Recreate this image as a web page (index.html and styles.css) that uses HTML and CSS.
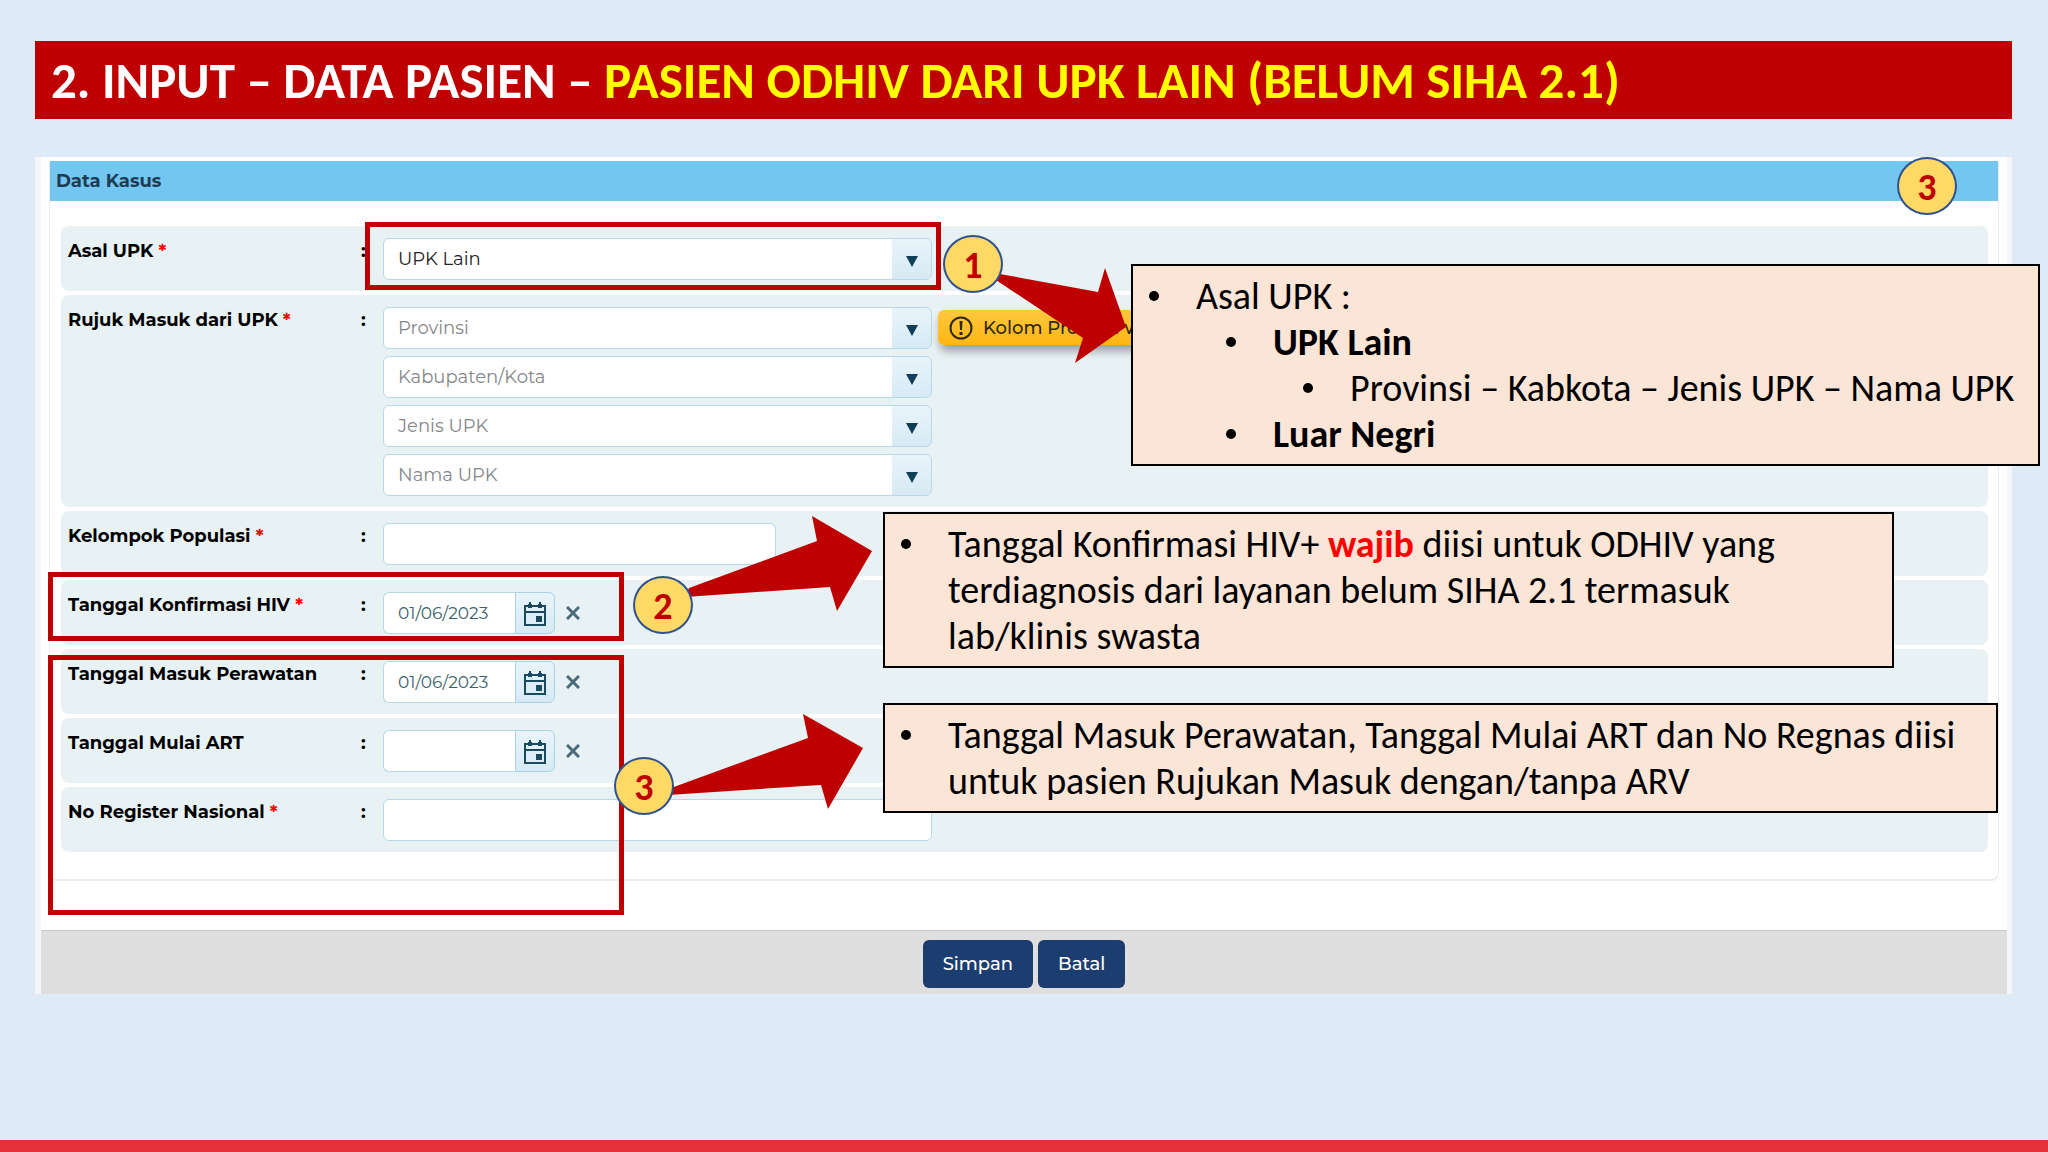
FILE: index.html
```html
<!DOCTYPE html>
<html lang="id">
<head>
<meta charset="utf-8">
<meta name="viewport" content="width=device-width, initial-scale=1">
<title>Input Data Pasien</title>
<link rel="stylesheet" href="styles.css">
</head>
<body>
<svg class="sprite" aria-hidden="true">
  <symbol id="calendar" viewBox="0 0 24 26">
    <path d="M2 5h20v19H2zM2 11h20M7 1v6M17 1v6" fill="none" stroke="currentColor" stroke-width="2"/>
    <path d="M5 3h4v4H5zM15 3h4v4h-4zM13 15h6v6h-6z" fill="currentColor"/>
  </symbol>
  <symbol id="caret" viewBox="0 0 12 11"><path d="M0 0h12L6 11z" fill="currentColor"/></symbol>
  <symbol id="cross" viewBox="0 0 14 14"><path d="M1 1l12 12M13 1L1 13" fill="none" stroke="currentColor" stroke-width="3"/></symbol>
</svg>
<main class="slide">
  <h1 class="title">2. INPUT – DATA PASIEN – <span class="title-accent">PASIEN ODHIV DARI UPK LAIN (BELUM SIHA 2.1)</span></h1>

  <form class="window">
    <section class="panel">
      <h2 class="panel-title">Data Kasus</h2>
      <div class="rows">
        <div class="row">
          <label class="label" for="asal">Asal UPK <span class="req">*</span></label><span class="colon">:</span>
          <div class="stack">
            <div class="select"><select id="asal" class="filled"><option>UPK Lain</option></select><svg class="caret"><use href="#caret"/></svg></div>
          </div>
        </div>
        <div class="row">
          <label class="label" for="provinsi">Rujuk Masuk dari UPK <span class="req">*</span></label><span class="colon">:</span>
          <div class="stack">
            <div class="select"><select id="provinsi"><option>Provinsi</option></select><svg class="caret"><use href="#caret"/></svg></div>
            <div class="select"><select aria-label="Kabupaten/Kota"><option>Kabupaten/Kota</option></select><svg class="caret"><use href="#caret"/></svg></div>
            <div class="select"><select aria-label="Jenis UPK"><option>Jenis UPK</option></select><svg class="caret"><use href="#caret"/></svg></div>
            <div class="select"><select aria-label="Nama UPK"><option>Nama UPK</option></select><svg class="caret"><use href="#caret"/></svg></div>
          </div>
          <p class="warning">
            <svg class="warning-icon" viewBox="0 0 24 24"><circle cx="12" cy="12" r="10.5" fill="none" stroke="currentColor" stroke-width="2"/><path d="M10.5 5h3l-.5 9h-2zM10.5 16h3v3h-3z" fill="currentColor"/></svg>
            Kolom Provinsi wajib
          </p>
        </div>
        <div class="row">
          <label class="label" for="populasi">Kelompok Populasi <span class="req">*</span></label><span class="colon">:</span>
          <div class="stack"><input id="populasi" class="text medium" type="text"></div>
        </div>
        <div class="row">
          <label class="label" for="konfirmasi">Tanggal Konfirmasi HIV <span class="req">*</span></label><span class="colon">:</span>
          <div class="date">
            <input id="konfirmasi" type="text" value="01/06/2023"><button type="button" class="pick" aria-label="Pilih tanggal"><svg><use href="#calendar"/></svg></button><button type="button" class="clear" aria-label="Hapus tanggal"><svg><use href="#cross"/></svg></button>
          </div>
        </div>
        <div class="row">
          <label class="label" for="perawatan">Tanggal Masuk Perawatan</label><span class="colon">:</span>
          <div class="date">
            <input id="perawatan" type="text" value="01/06/2023"><button type="button" class="pick" aria-label="Pilih tanggal"><svg><use href="#calendar"/></svg></button><button type="button" class="clear" aria-label="Hapus tanggal"><svg><use href="#cross"/></svg></button>
          </div>
        </div>
        <div class="row">
          <label class="label" for="art">Tanggal Mulai ART</label><span class="colon">:</span>
          <div class="date">
            <input id="art" type="text"><button type="button" class="pick" aria-label="Pilih tanggal"><svg><use href="#calendar"/></svg></button><button type="button" class="clear" aria-label="Hapus tanggal"><svg><use href="#cross"/></svg></button>
          </div>
        </div>
        <div class="row">
          <label class="label" for="register">No Register Nasional <span class="req">*</span></label><span class="colon">:</span>
          <div class="stack"><input id="register" class="text" type="text"></div>
        </div>
      </div>
    </section>
    <footer class="actions">
      <button type="button" class="btn">Simpan</button>
      <button type="button" class="btn">Batal</button>
    </footer>
  </form>

  <div class="frame frame-asal"></div>
  <div class="frame frame-konfirmasi"></div>
  <div class="frame frame-perawatan"></div>

  <svg class="arrows" aria-hidden="true">
    <path d="M1000 274L1098 292L1105 268L1126 327L1075 363L1083 338L990 276z"/>
    <path d="M689 588L817 541L812 516L872 551L837 611L830 587L685 597z"/>
    <path d="M671 788L808 738L803 714L863 748L828 809L821 785L668 795z"/>
  </svg>

  <span class="marker marker-1">1</span>
  <span class="marker marker-2">2</span>
  <span class="marker marker-3">3</span>
  <span class="marker marker-page">3</span>

  <aside class="note note-asal">
    <ul>
      <li>Asal UPK :
        <ul>
          <li><b>UPK Lain</b>
            <ul><li>Provinsi – Kabkota – Jenis UPK – Nama UPK</li></ul>
          </li>
          <li><b>Luar Negri</b></li>
        </ul>
      </li>
    </ul>
  </aside>
  <aside class="note note-konfirmasi">
    <ul><li>Tanggal Konfirmasi HIV+ <b class="must">wajib</b> diisi untuk ODHIV yang<br>terdiagnosis dari layanan belum SIHA 2.1 termasuk<br>lab/klinis swasta</li></ul>
  </aside>
  <aside class="note note-perawatan">
    <ul><li>Tanggal Masuk Perawatan, Tanggal Mulai ART dan No Regnas diisi<br>untuk pasien Rujukan Masuk dengan/tanpa ARV</li></ul>
  </aside>
</main>
</body>
</html>
```

FILE: styles.css
```css
* { box-sizing: border-box; }

body {
  margin: 0;
  background: #deeaf6;
  color: #000;
  font-family: Montserrat, Inter, sans-serif;
  font-size: 18px;
}

h1, h2, p, ul { margin: 0; padding: 0; }
button, input, select { font: inherit; margin: 0; }

.sprite { position: absolute; width: 0; height: 0; }

.slide {
  position: relative;
  min-height: 100vh;
  padding: 41px 36px 12px 35px;
  border-bottom: 12px solid #e43138;
}

.title {
  height: 78px;
  padding-left: 16px;
  background: #bf0000;
  color: #fff;
  font: 700 51px/80px Carlito, Lato, sans-serif;
  white-space: nowrap;
}
.title-accent { color: #ff0; }

/* form window */
.window {
  margin-top: 38px;
  background: #fff;
  border: solid #f4f6f8;
  border-width: 0 5px 0 6px;
}
.panel {
  margin: 0 8px 49px;
  border: 1px solid #ececec;
  border-width: 0 1px 2px;
  border-radius: 0 0 8px 8px;
  border-top: 4px solid #fff;
}
.panel-title {
  height: 40px;
  padding-left: 6px;
  background: #73c6f0;
  color: #1d3c53;
  font-size: 18px;
  font-weight: 700;
  line-height: 40px;
}
.rows {
  display: flex;
  flex-direction: column;
  gap: 4px;
  padding: 25px 10px 27px 11px;
}
.row {
  display: flex;
  align-items: flex-start;
  padding: 12px 0 11px 7px;
  background: #e8f1f3;
  border-radius: 8px;
}
.label, .colon {
  font-weight: 700;
  line-height: 26px;
}
.label { width: 293px; }
.colon { width: 22px; }
.req { color: #f00; }

.stack {
  display: flex;
  flex-direction: column;
  gap: 7px;
  width: 549px;
}
.select { display: grid; align-items: center; }
.select select, .text, .date input {
  height: 42px;
  border: 1px solid #b5d9e6;
  border-radius: 6px;
  background: #fff;
  padding: 0 14px;
}
.select select {
  grid-area: 1 / 1;
  appearance: none;
  color: #84878a;
  background: linear-gradient(#e9f4fa, #d6eaf5) right / 39px 100% no-repeat #fff;
}
.select .filled { color: #222; }
.caret {
  grid-area: 1 / 1;
  justify-self: end;
  width: 12px;
  height: 11px;
  margin: 4px 14px 0 0;
  color: #0e3f57;
  pointer-events: none;
}
.text { width: 100%; }
.medium { width: 393px; }

.date { display: flex; }
.date input {
  width: 132px;
  border-right: 0;
  border-radius: 6px 0 0 6px;
  color: #3c5f6c;
  font-size: 17px;
}
.pick {
  display: grid;
  place-items: center;
  width: 40px;
  height: 42px;
  padding: 2px 0 0;
  border: 1px solid #a9d3e2;
  border-radius: 0 6px 6px 0;
  background: linear-gradient(#e9f4fa, #d6eaf5);
  color: #1a4a60;
}
.pick svg { width: 24px; height: 26px; }
.clear {
  display: grid;
  place-items: center;
  width: 36px;
  height: 42px;
  padding: 0;
  border: 0;
  background: none;
  color: #4a6c7a;
}
.clear svg { width: 14px; height: 14px; }

.warning {
  display: flex;
  align-items: center;
  gap: 10px;
  height: 35px;
  margin: 3px 0 0 6px;
  padding: 0 11px;
  border-radius: 6px;
  background: linear-gradient(#ffc83f, #ffb612);
  box-shadow: 2px 6px 10px rgba(0, 0, 0, .35);
  color: #2e2710;
  font-weight: 500;
  white-space: nowrap;
}
.warning-icon { width: 24px; height: 24px; }

.actions {
  display: flex;
  justify-content: center;
  gap: 5px;
  height: 64px;
  padding-top: 9px;
  border-top: 1px solid #c8c8c8;
  background: #dfdfdf;
}
.btn {
  height: 48px;
  padding: 0 20px;
  border: 0;
  border-radius: 6px;
  background: #1c3d70;
  color: #fff;
  font-weight: 500;
}

/* annotations laid over the form */
.frame {
  position: absolute;
  border: 5px solid #bf0000;
}
.frame-asal { left: 365px; top: 222px; width: 576px; height: 68px; }
.frame-konfirmasi { left: 48px; top: 572px; width: 576px; height: 69px; }
.frame-perawatan { left: 48px; top: 655px; width: 576px; height: 260px; }

.arrows {
  position: absolute;
  left: 0;
  top: 0;
  width: 100%;
  height: 100%;
  fill: #bf0000;
  pointer-events: none;
}

.marker {
  position: absolute;
  width: 60px;
  height: 58px;
  border: 2px solid #2f528f;
  border-radius: 50%;
  background: #ffd966;
  color: #c00000;
  font: 700 38px/56px Carlito, Lato, sans-serif;
  text-align: center;
}
.marker-1 { left: 943px; top: 235px; }
.marker-2 { left: 633px; top: 576px; }
.marker-3 { left: 614px; top: 757px; }
.marker-page { right: 91px; top: 157px; }

.note {
  position: absolute;
  padding: 7px 0 7px 63px;
  border: 2px solid #000;
  background: #fbe5d6;
  font: 38px/46px Carlito, Lato, sans-serif;
  white-space: nowrap;
}
.note-asal { left: 1131px; top: 264px; width: 909px; }
.note-konfirmasi { left: 883px; top: 512px; width: 1011px; }
.note-perawatan { left: 883px; top: 703px; width: 1115px; }
.note ul { list-style: none; }
.note ul ul { padding-left: 77px; }
.note li { position: relative; }
.note li::before {
  content: "";
  position: absolute;
  left: -47px;
  top: 18px;
  width: 10px;
  height: 10px;
  border-radius: 50%;
  background: #000;
}
.must { color: #f00; }
```
